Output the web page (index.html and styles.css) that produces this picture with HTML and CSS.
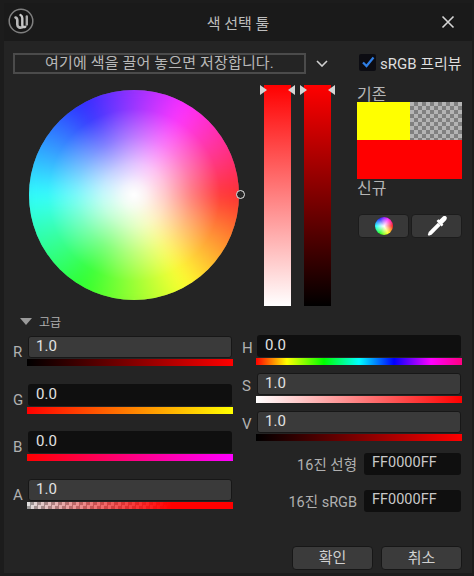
FILE: index.html
```html
<!DOCTYPE html>
<html lang="ko">
<head>
<meta charset="utf-8">
<title>색 선택 툴</title>
<link rel="stylesheet" href="styles.css">
</head>
<body>
<div class="window">
  <header class="titlebar">
    <svg class="logo" viewBox="0 0 26 26" width="26" height="26">
      <circle cx="13" cy="13" r="11.800" fill="#161616" stroke="#7f7f7f" stroke-width="1.500"/>
      <path d="M7.500 9.500c1.500.5 1.800 1.500 1.800 3v4c0 2.600 2.600 3.800 5 2.800" fill="none" stroke="#b9b9b9" stroke-width="2.600" stroke-linecap="round"/>
      <path d="M12.500 7c1.500.8 1.800 2 1.800 3.200v7c0 1.500 1.600 2.300 3 1.500" fill="none" stroke="#c8c8c8" stroke-width="2.400" stroke-linecap="round"/>
      <path d="M18.800 8.500v8" fill="none" stroke="#a8a8a8" stroke-width="2.400" stroke-linecap="round"/>
    </svg>
    <span class="title">색 선택 툴</span>
    <svg class="close" viewBox="0 0 14 14" width="14" height="14">
      <path d="M1.500 1.500l11 11M12.500 1.500l-11 11" stroke="#d6d6d6" stroke-width="1.600" fill="none"/>
    </svg>
  </header>

  <main class="content">
    <section class="top">
      <div class="top-left">
        <div class="drop-row">
          <div class="dropzone">여기에 색을 끌어 놓으면 저장합니다.</div>
          <svg class="chevron" viewBox="0 0 12 7" width="12" height="7">
            <path d="M1 1l5 5 5-5" stroke="#d0d0d0" stroke-width="1.600" fill="none"/>
          </svg>
        </div>
        <div class="picker-row">
          <div class="wheel-wrap">
            <div class="wheel"></div>
            <span class="wheel-handle"></span>
          </div>
          <div class="vbar vbar-sat"><i class="tri tri-l"></i><i class="tri tri-r"></i></div>
          <div class="vbar vbar-val"><i class="tri tri-l"></i><i class="tri tri-r"></i></div>
        </div>
      </div>
      <aside class="top-right">
        <label class="srgb">
          <span class="check">
            <svg viewBox="0 0 16 16" width="16" height="16"><path d="M3 8.500l3.500 3.500 7-8.500" stroke="#2f7fe6" stroke-width="2.200" fill="none"/></svg>
          </span>
          <span>sRGB 프리뷰</span>
        </label>
        <div class="swatch-label lbl-old">기존</div>
        <div class="swatch">
          <div class="swatch-old"><div class="old-solid"></div><div class="old-alpha"></div></div>
          <div class="swatch-new"></div>
        </div>
        <div class="swatch-label lbl-new">신규</div>
        <div class="tools">
          <button class="tool"><span class="mini-wheel"></span></button>
          <button class="tool">
            <svg viewBox="0 0 24 24" width="22" height="22">
              <path d="M3 22.500l-1-1 1-3L13 8.500l3 3-10 10z" fill="#fff"/>
              <path d="M11.500 6.500l2-2 1 1 4-4c1.500-1 3.500-.5 4 .8.500 1.500 0 2.700-1 3.700l-3.500 3.500 1 1-2 2z" fill="#fff"/>
            </svg>
          </button>
        </div>
      </aside>
    </section>

    <div class="advanced"><i class="adv-tri"></i><span>고급</span></div>

    <section class="channels">
      <div class="col col-left">
        <div class="channel ch-l"><span class="ch-name">R</span><div class="ch-body"><div class="num lit">1.0</div><div class="bar bar-r"></div></div></div>
        <div class="channel ch-l"><span class="ch-name">G</span><div class="ch-body"><div class="num">0.0</div><div class="bar bar-g"></div></div></div>
        <div class="channel ch-l"><span class="ch-name">B</span><div class="ch-body"><div class="num">0.0</div><div class="bar bar-b"></div></div></div>
        <div class="channel ch-l"><span class="ch-name">A</span><div class="ch-body"><div class="num lit">1.0</div><div class="bar bar-a"></div></div></div>
      </div>
      <div class="col col-right">
        <div class="channel ch-r"><span class="ch-name">H</span><div class="ch-body"><div class="num">0.0</div><div class="bar bar-h"></div></div></div>
        <div class="channel ch-r"><span class="ch-name">S</span><div class="ch-body"><div class="num lit">1.0</div><div class="bar bar-s"></div></div></div>
        <div class="channel ch-r"><span class="ch-name">V</span><div class="ch-body"><div class="num lit">1.0</div><div class="bar bar-v"></div></div></div>
        <div class="hex hex-first"><span>16진 선형</span><div class="hex-field">FF0000FF</div></div>
        <div class="hex"><span>16진 sRGB</span><div class="hex-field">FF0000FF</div></div>
      </div>
    </section>

    <footer class="actions">
      <button class="btn">확인</button>
      <button class="btn">취소</button>
    </footer>
  </main>
</div>
</body>
</html>
```

FILE: styles.css
```css
* { box-sizing: border-box; }

html, body {
  margin: 0;
  padding: 0;
  background: #1c1c1c;
}

body {
  width: 474px;
  height: 576px;
  overflow: hidden;
  font-family: Roboto, "Noto Sans CJK KR", sans-serif;
  color: #c0c0c0;
}

.window {
  width: 474px;
  height: 576px;
  padding: 3px 2px 3px 4px;
  display: flex;
  flex-direction: column;
  background: #1c1c1c;
}

.titlebar {
  height: 38px;
  flex: none;
  display: flex;
  align-items: center;
  justify-content: center;
  position: relative;
  background: #1a1a1a;
}

.logo {
  position: absolute;
  left: 4px;
  top: 5px;
}

.title {
  font-size: 15px;
  color: #bdbdbd;
}

.close {
  position: absolute;
  right: 17px;
  top: 12px;
}

.content {
  flex: 1;
  display: flex;
  flex-direction: column;
  background: #242424;
  padding: 12px 10px 0 9px;
}

.top {
  display: flex;
  height: 265px;
  flex: none;
}

.top-left {
  width: 344px;
  flex: none;
}

.drop-row {
  display: flex;
  align-items: center;
  height: 20px;
}

.dropzone {
  width: 293px;
  height: 21px;
  border: 2px solid #4b4b4b;
  font-size: 15px;
  letter-spacing: .15px;
  line-height: 16px;
  text-align: center;
  color: #b8b8b8;
  white-space: nowrap;
}

.chevron {
  margin-left: 10px;
}

.picker-row {
  display: flex;
  margin-top: 12px;
}

.wheel-wrap {
  width: 210px;
  height: 210px;
  margin: 5px 0 0 16px;
  position: relative;
  flex: none;
}

.wheel {
  width: 210px;
  height: 210px;
  border-radius: 50%;
  overflow: hidden;
  position: relative;
  background: #888;
  filter: blur(.5px);
}

.wheel::before {
  content: "";
  position: absolute;
  inset: -14px;
  filter: blur(9px);
  background: conic-gradient(from 90deg, #ff0000, #ffff00, #00ff00, #00ffff, #0000ff, #ff00ff, #ff0000);
}

.wheel::after {
  content: "";
  position: absolute;
  inset: 0;
  border-radius: 50%;
  background: radial-gradient(circle closest-side, #fff 0%, rgba(255,255,255,.92) 12%, rgba(255,255,255,.76) 30%, rgba(255,255,255,.48) 55%, rgba(255,255,255,.22) 82%, rgba(255,255,255,.18) 100%);
}

.wheel-handle {
  position: absolute;
  right: -6px;
  top: 100px;
  width: 9px;
  height: 9px;
  border: 1.500px solid #e8e8e8;
  border-radius: 50%;
  background: #262626;
}

.vbar {
  width: 27px;
  height: 221px;
  position: relative;
  flex: none;
}

.vbar-sat {
  margin-left: 25px;
  background: linear-gradient(#ff0000, #ffffff);
}

.vbar-val {
  margin-left: 13px;
  background: linear-gradient(#ff0000, #000000);
}

.tri {
  position: absolute;
  top: 0;
  width: 0;
  height: 0;
  border-top: 5px solid transparent;
  border-bottom: 5px solid transparent;
}

.tri-l {
  left: -4px;
  border-left: 7px solid #d4d4d4;
}

.tri-r {
  right: -4px;
  border-right: 7px solid #d4d4d4;
}

.top-right {
  flex: 1;
  display: flex;
  flex-direction: column;
  margin-top: -1px;
}

.srgb {
  display: flex;
  align-items: center;
  gap: 4px;
  height: 20px;
  font-size: 15px;
  color: #dedede;
  white-space: nowrap;
  margin-left: 2px;
}

.check {
  width: 17px;
  height: 17px;
  background: #0c0c12;
  border-radius: 2px;
  display: flex;
  align-items: center;
  justify-content: center;
}

.swatch-label {
  font-size: 16px;
  line-height: 20px;
  color: #b5b5b5;
}

.lbl-old { margin-top: 13px; }

.swatch {
  width: 105px;
  height: 77px;
  margin-top: -3px;
  display: flex;
  flex-direction: column;
}

.swatch-old {
  height: 38px;
  display: flex;
}

.old-solid {
  width: 53px;
  background: #ffff00;
}

.old-alpha {
  flex: 1;
  background-color: #b4b4b4;
  background-image:
    linear-gradient(45deg, #808080 25%, transparent 25%, transparent 75%, #808080 75%),
    linear-gradient(45deg, #808080 25%, transparent 25%, transparent 75%, #808080 75%);
  background-size: 8px 8px;
  background-position: 0 0, 4px 4px;
}

.swatch-new {
  flex: 1;
  background: #ff0000;
}

.lbl-new { margin-top: 0; }

.tools {
  display: flex;
  gap: 2px;
  margin-top: 15px;
  margin-left: 1px;
}

.tool {
  width: 51px;
  height: 24px;
  padding: 0;
  border: 1px solid #1c1c1c;
  border-radius: 4px;
  background: #383838;
  display: flex;
  align-items: center;
  justify-content: center;
}

.mini-wheel {
  width: 18px;
  height: 18px;
  border-radius: 50%;
  background:
    radial-gradient(circle closest-side, #fff 0%, rgba(255,255,255,.65) 40%, rgba(255,255,255,.1) 100%),
    conic-gradient(from 90deg, #ff0000, #ffff00, #00ff00, #00ffff, #0000ff, #ff00ff, #ff0000);
}

.advanced {
  display: flex;
  align-items: center;
  gap: 7px;
  height: 14px;
  margin: -4px 0 0 7px;
  font-size: 12px;
  color: #b0b0b0;
}

.adv-tri {
  width: 0;
  height: 0;
  border-left: 6px solid transparent;
  border-right: 6px solid transparent;
  border-top: 7px solid #9a9a9a;
}

.channels {
  display: flex;
  margin-top: 8px;
  height: 190px;
}

.col {
  width: 229px;
  flex: none;
  display: flex;
  flex-direction: column;
}

.col-right {
  width: 220px;
  margin-top: -1px;
}

.channel {
  display: flex;
  align-items: flex-start;
}

.ch-l { height: 48px; }
.ch-r { height: 38px; }

.ch-name {
  width: 14px;
  flex: none;
  font-size: 15px;
  line-height: 16px;
  color: #b0b0b0;
}

.ch-l .ch-name { margin-top: 8px; }
.ch-r .ch-name { margin-top: 5px; }

.ch-body {
  width: 206px;
}

.num {
  height: 22px;
  margin: 0 1px 1px 1px;
  padding-left: 8px;
  border-radius: 3px;
  background: #0f0f0f;
  font-size: 15px;
  line-height: 20px;
  color: #e2e2e2;
}

.num.lit {
  background: #3a3a3a;
  border: 1px solid #171717;
  padding-left: 7px;
  line-height: 19px;
}

.bar {
  height: 7px;
}

.bar-r { background: linear-gradient(90deg, #000, #ff0000); }
.bar-g { background: linear-gradient(90deg, #ff0000, #ffff00); }
.bar-b { background: linear-gradient(90deg, #ff0000, #ff00ff); }
.bar-a {
  background:
    linear-gradient(90deg, rgba(255,0,0,0), #ff0000 70%),
    repeating-conic-gradient(#9a9a9a 0 25%, #e0e0e0 0 50%) 0 0 / 7px 7px;
}
.bar-h { background: linear-gradient(90deg, #ff0000, #ffff00 15%, #00ff00 33%, #00ffff 50%, #0000ff 67%, #ff00ff 85%, #ff0080); }
.bar-s { background: linear-gradient(90deg, #ffffff, #ff0000); }
.bar-v { background: linear-gradient(90deg, #000, #ff0000); }

.hex {
  display: flex;
  justify-content: flex-end;
  align-items: center;
  gap: 7px;
  height: 23px;
  margin-top: 14px;
  padding-right: 1px;
  font-size: 14.500px;
  color: #b0b0b0;
  white-space: nowrap;
}

.hex-first {
  margin-top: 3px;
}

.hex-field {
  width: 97px;
  height: 22px;
  padding-left: 8px;
  border-radius: 3px;
  background: #0f0f0f;
  font-size: 14.500px;
  line-height: 20px;
  color: #c8c8c8;
}

.actions {
  display: flex;
  justify-content: flex-end;
  gap: 8px;
  margin-top: 20px;
}

.btn {
  width: 81px;
  height: 24px;
  padding: 0;
  border: 1px solid #171717;
  border-radius: 4px;
  background: #3b3b3b;
  color: #d0d0d0;
  font-family: inherit;
  font-size: 15px;
  line-height: 20px;
}
```
